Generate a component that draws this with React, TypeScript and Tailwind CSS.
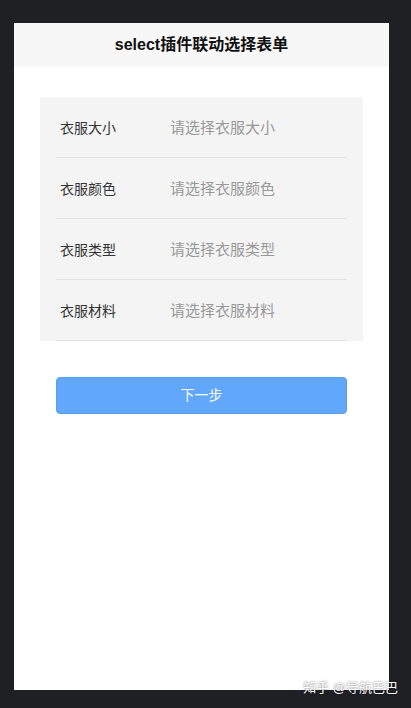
export default function App() {
  const rows = [
    { label: "衣服大小", hint: "请选择衣服大小" },
    { label: "衣服颜色", hint: "请选择衣服颜色" },
    { label: "衣服类型", hint: "请选择衣服类型" },
    { label: "衣服材料", hint: "请选择衣服材料" },
  ];

  return (
    <div
      className="relative h-[708px] w-[411px] bg-[#1e2024] pt-[23px] pl-[14px]"
      style={{ fontFamily: '"Liberation Sans", "Noto Sans CJK SC", sans-serif' }}
    >
      <div className="flex h-[667px] w-[375px] flex-col bg-white">
        {/* header */}
        <div className="flex h-[44px] items-center justify-center bg-[#f7f7f7] text-[16px] font-bold text-[#111]">
          select插件联动选择表单
        </div>

        {/* form list */}
        <div className="mx-[26px] mt-[30px] bg-[#f4f4f4]">
          {rows.map((r) => (
            <div key={r.label} className="px-[16px]">
              <div className="flex h-[61px] items-center border-b border-[#e2e2e2] pt-[2px]">
                <span className="w-[114px] pl-[4px] text-[14px] text-[#333]">{r.label}</span>
                <span className="text-[15px] text-[#999]">{r.hint}</span>
              </div>
            </div>
          ))}
        </div>

        {/* button */}
        <div className="mt-[36px] px-[42px]">
          <button className="flex h-[37px] w-full items-center justify-center rounded-[4px] border border-[#5a9ee8] bg-[#61a8fc] text-[14px] text-white">
            下一步
          </button>
        </div>
      </div>

      {/* watermark */}
      <div className="absolute right-[13px] top-[678px] text-[13px] text-white [text-shadow:0_0_2px_rgba(0,0,0,0.6)]">
        知乎 @导航巴巴
      </div>
    </div>
  );
}
